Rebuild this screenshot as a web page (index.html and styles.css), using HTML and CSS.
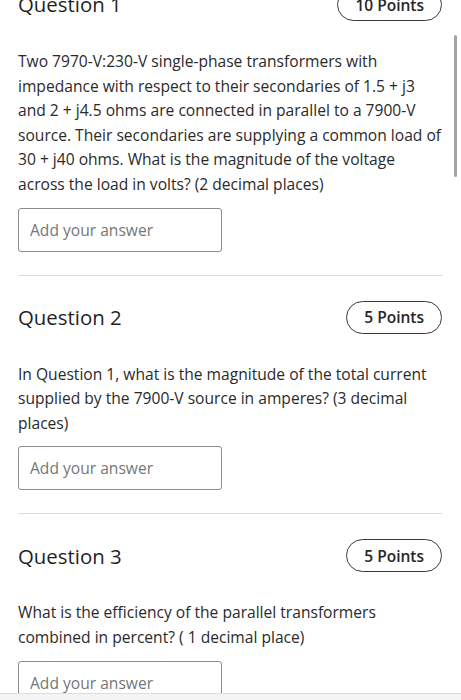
FILE: index.html
```html
<!DOCTYPE html>
<html lang="en">
<head>
<meta charset="utf-8">
<link rel="stylesheet" href="styles.css">
</head>
<body>
<div class="page">
  <section class="question">
    <div class="q-head">
      <h2 class="q-title">Question 1</h2>
      <span class="points">10 Points</span>
    </div>
    <p class="q-text">Two 7970-V:230-V single-phase transformers with impedance with respect to their secondaries of 1.5 + j3 and 2 + j4.5 ohms are connected in parallel to a 7900-V source. Their secondaries are supplying a common load of 30 + j40 ohms. What is the magnitude of the voltage across the load in volts? (2 decimal places)</p>
    <input class="answer" type="text" placeholder="Add your answer">
  </section>
  <hr class="divider">
  <section class="question">
    <div class="q-head">
      <h2 class="q-title">Question 2</h2>
      <span class="points">5 Points</span>
    </div>
    <p class="q-text">In Question 1, what is the magnitude of the total current supplied by the 7900-V source in amperes? (3 decimal places)</p>
    <input class="answer" type="text" placeholder="Add your answer">
  </section>
  <hr class="divider">
  <section class="question">
    <div class="q-head">
      <h2 class="q-title">Question 3</h2>
      <span class="points">5 Points</span>
    </div>
    <p class="q-text">What is the efficiency of the parallel transformers combined in percent? ( 1 decimal place)</p>
    <input class="answer" type="text" placeholder="Add your answer">
  </section>
</div>
<div class="scrollbar"></div>
<div class="bottom-bar"></div>
</body>
</html>
```
FILE: styles.css
```css
html, body {
  margin: 0;
  padding: 0;
  background: #ffffff;
  overflow: hidden;
}
body {
  font-family: "Open Sans", "Noto Sans", sans-serif;
  color: #262626;
}
.page {
  margin-top: -12px;
  padding: 0 19px 0 18px;
}
.question {
  display: flex;
  flex-direction: column;
  align-items: flex-start;
}
.q-head {
  width: 100%;
  height: 33px;
  display: flex;
  justify-content: space-between;
  align-items: center;
}
.q-title {
  margin: 0;
  font-size: 20.4px;
  font-weight: 500;
  color: #1f1f1f;
  line-height: 1;
}
.points {
  box-sizing: border-box;
  height: 33px;
  display: flex;
  align-items: center;
  padding: 0 17px;
  border: 1.5px solid #3a3a3a;
  border-radius: 17px;
  font-size: 15.5px;
  font-weight: 600;
  color: #262626;
}
.q-text {
  margin: 28px 0 0 0;
  font-size: 15.6px;
  line-height: 24.6px;
  color: #2a2a2a;
}
.answer {
  box-sizing: border-box;
  margin-top: 11px;
  width: 204px;
  height: 44px;
  padding: 0 11px;
  border: 1px solid #8c8c8c;
  border-radius: 3px;
  font-family: "Open Sans", "Noto Sans", sans-serif;
  font-size: 15.6px;
  color: #333333;
  background: #ffffff;
}
.answer::placeholder {
  color: #767676;
}
.divider {
  border: 0;
  border-top: 1px solid #dcdcdc;
  margin: 23px 0 25px 0;
}
.scrollbar {
  position: fixed;
  left: 454px;
  top: 35px;
  width: 3px;
  height: 142px;
  border-radius: 2px;
  background: #a3a3a3;
}
.bottom-bar {
  position: fixed;
  left: 0;
  right: 0;
  bottom: 0;
  height: 6px;
  background: #f4f4f4;
  border-top: 1px solid #dedede;
}
```
